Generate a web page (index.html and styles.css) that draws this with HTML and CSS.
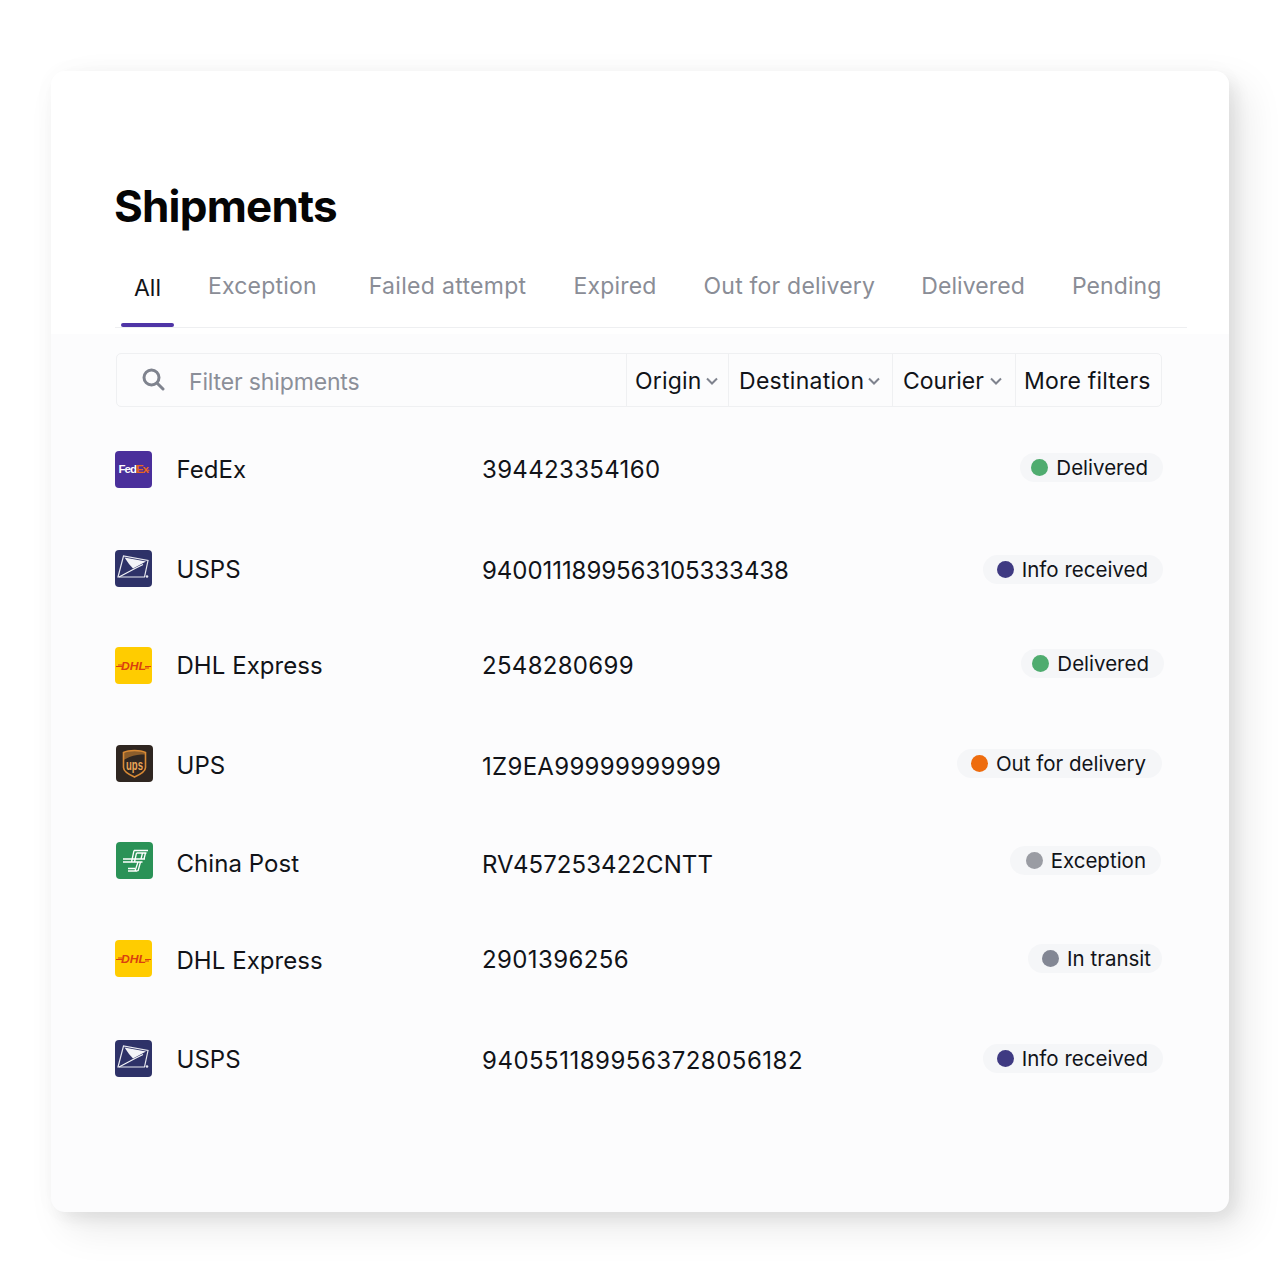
FILE: index.html
```html
<!DOCTYPE html>
<html lang="en">
<head>
    <meta charset="UTF-8">
    <title>Shipments</title>
    <link rel="stylesheet" href="styles.css">
</head>
<body>
    <div class="card">
        <header class="card-head">
            <h1>Shipments</h1>
            <nav class="tabs">
                <a class="tab tab-active">All</a>
                <a class="tab tab-wide">Exception</a>
                <a class="tab tab-failed">Failed attempt</a>
                <a class="tab">Expired</a>
                <a class="tab tab-out">Out for delivery</a>
                <a class="tab tab-tight">Delivered</a>
                <a class="tab tab-tight">Pending</a>
            </nav>
        </header>
        <main class="card-body">
            <div class="filters">
                <div class="search">
                    <svg class="search-icon" viewBox="0 0 24 24" width="24" height="24"><circle cx="10.5" cy="10.5" r="7.5" fill="none" stroke="#7f838e" stroke-width="3"/><path d="M16 16l6 6" stroke="#7f838e" stroke-width="3" stroke-linecap="round"/></svg>
                    <span>Filter shipments</span>
                </div>
                <div class="filter filter-origin">Origin<svg class="chev" viewBox="0 0 12 8" width="12" height="8"><path d="M1 1.500l5 5 5-5" fill="none" stroke="#7f838e" stroke-width="2"/></svg></div>
                <div class="filter filter-dest">Destination<svg class="chev" viewBox="0 0 12 8" width="12" height="8"><path d="M1 1.500l5 5 5-5" fill="none" stroke="#7f838e" stroke-width="2"/></svg></div>
                <div class="filter filter-courier">Courier<svg class="chev" viewBox="0 0 12 8" width="12" height="8"><path d="M1 1.500l5 5 5-5" fill="none" stroke="#7f838e" stroke-width="2"/></svg></div>
                <div class="filter filter-more">More filters</div>
            </div>

            <div class="rows">
                <div class="row">
                    <svg class="logo" viewBox="0 0 37 37"><rect width="37" height="37" rx="4" fill="#4a2f9b"/><text x="3.500" y="22" class="fedex"><tspan fill="#fff">Fed</tspan><tspan fill="#e8661a">Ex</tspan></text><path d="M32 19.500h2.500M33.250 18.250v2.500" stroke="#e8661a" stroke-width=".7"/></svg>
                    <span class="name">FedEx</span>
                    <span class="num">394423354160</span>
                    <span class="pill pill-delivered"><i class="dot dot-green"></i>Delivered</span>
                </div>
                <div class="row">
                    <svg class="logo" viewBox="0 0 37 37"><rect width="37" height="37" rx="4" fill="#2e3268"/><path d="M3 27L8.500 6 33 10.500 29.500 27z" fill="none" stroke="#e8e9f0" stroke-width="1.200"/><path d="M9.500 7.500L31 11.500 18 18.500 14 14z" fill="#f3f4f8"/><path d="M4 27L20 18.500 28 14.500" fill="none" stroke="#f3f4f8" stroke-width="1.200"/><circle cx="32" cy="26.500" r="1.300" fill="#e8e9f0"/></svg>
                    <span class="name">USPS</span>
                    <span class="num">9400111899563105333438</span>
                    <span class="pill pill-info"><i class="dot dot-navy"></i>Info received</span>
                </div>
                <div class="row">
                    <svg class="logo" viewBox="0 0 37 37"><rect width="37" height="37" rx="4" fill="#ffcc00"/><path d="M1 19.500h6M30 19.500h6M3 18h4M30 21h4" stroke="#d9400f" stroke-width="1"/><text x="6" y="22.500" class="dhl" textLength="25" lengthAdjust="spacingAndGlyphs">DHL</text></svg>
                    <span class="name">DHL Express</span>
                    <span class="num">2548280699</span>
                    <span class="pill pill-delivered pill-shift"><i class="dot dot-green"></i>Delivered</span>
                </div>
                <div class="row">
                    <svg class="logo logo-ups" viewBox="0 0 37 37"><rect width="37" height="37" rx="4" fill="#2f2621"/><path d="M18.500 5.500c4 0 8 .5 11 2v15c0 4.500-6.500 7.500-11 9.500-4.500-2-11-5-11-9.500v-15c3-1.500 7-2 11-2z" fill="none" stroke="#d98a35" stroke-width="1.600"/><path d="M18.500 5.500c4 0 8 .5 11 2v2c-6 0-11 .5-16 2.500l-6 3V7.500c3-1.500 7-2 11-2z" fill="#d98a35" opacity=".55"/><text x="10" y="24.500" class="ups" textLength="17" lengthAdjust="spacingAndGlyphs">ups</text></svg>
                    <span class="name">UPS</span>
                    <span class="num">1Z9EA99999999999</span>
                    <span class="pill pill-out"><i class="dot dot-orange"></i>Out for delivery</span>
                </div>
                <div class="row">
                    <svg class="logo logo-china" viewBox="0 0 37 37"><rect width="37" height="37" rx="4" fill="#2a9257"/><path d="M18 8.500h14M20.500 11h10M7 17h22M7 20h19.500M12 26.500h7M12 29h9.500M18 8.500l-2.500 11.500M20.500 11l-2 9M22 20l-3 9M26.500 11l-1.500 6M29.500 11l-1.500 6M24.500 20l-2.500 9" fill="none" stroke="#fff" stroke-width="1.300"/></svg>
                    <span class="name">China Post</span>
                    <span class="num">RV457253422CNTT</span>
                    <span class="pill pill-exception"><i class="dot dot-gray"></i>Exception</span>
                </div>
                <div class="row">
                    <svg class="logo" viewBox="0 0 37 37"><rect width="37" height="37" rx="4" fill="#ffcc00"/><path d="M1 19.500h6M30 19.500h6M3 18h4M30 21h4" stroke="#d9400f" stroke-width="1"/><text x="6" y="22.500" class="dhl" textLength="25" lengthAdjust="spacingAndGlyphs">DHL</text></svg>
                    <span class="name">DHL Express</span>
                    <span class="num">2901396256</span>
                    <span class="pill pill-transit"><i class="dot dot-slate"></i>In transit</span>
                </div>
                <div class="row">
                    <svg class="logo" viewBox="0 0 37 37"><rect width="37" height="37" rx="4" fill="#2e3268"/><path d="M3 27L8.500 6 33 10.500 29.500 27z" fill="none" stroke="#e8e9f0" stroke-width="1.200"/><path d="M9.500 7.500L31 11.500 18 18.500 14 14z" fill="#f3f4f8"/><path d="M4 27L20 18.500 28 14.500" fill="none" stroke="#f3f4f8" stroke-width="1.200"/><circle cx="32" cy="26.500" r="1.300" fill="#e8e9f0"/></svg>
                    <span class="name">USPS</span>
                    <span class="num">9405511899563728056182</span>
                    <span class="pill pill-info"><i class="dot dot-navy"></i>Info received</span>
                </div>
            </div>
        </main>
    </div>
</body>
</html>
```

FILE: styles.css
```css
* {
    box-sizing: border-box;
}
html, body {
    margin: 0;
    background: #fff;
}
body {
    width: 1280px;
    height: 1280px;
    padding: 71px 51px 0;
    font-family: Inter, "Liberation Sans", sans-serif;
    color: #111318;
    overflow: hidden;
}
.card {
    width: 1178px;
    height: 1141px;
    border-radius: 14px;
    overflow: hidden;
    background: #fcfcfd;
    box-shadow: 8px 8px 16px rgba(0,0,0,0.06), 16px 16px 40px rgba(0,0,0,0.09), 0 0 26px rgba(0,0,0,0.025);
    display: flex;
    flex-direction: column;
}
.card-head {
    background: #fff;
    height: 263px;
    padding: 107px 42px 0 64px;
}
h1 {
    margin: 0 0 0 -1px;
    font-size: 44px;
    line-height: 56px;
    font-weight: 700;
    letter-spacing: -0.8px;
    color: #050505;
}
.tabs {
    display: flex;
    margin-top: 28px;
    height: 66px;
    border-bottom: 1px solid #eeeff1;
    padding-left: 6px;
    font-size: 23px;
    letter-spacing: 0.2px;
    color: #8a8d96;
}
.tab {
    padding: 8px 0 0;
    margin-right: 47px;
    line-height: 32px;
    white-space: nowrap;
}
.tab-wide {
    margin-right: 52px;
}
.tab-failed {
    letter-spacing: 0.3px;
}
.tab-out {
    margin-right: 46px;
}
.tab-tight {
    letter-spacing: 0.1px;
}
.tab-active {
    color: #111318;
    margin-left: 13px;
    padding-top: 10px;
    letter-spacing: 0;
    position: relative;
}
.tab-active::after {
    content: "";
    position: absolute;
    left: -13px;
    right: -13px;
    bottom: 0;
    height: 4px;
    border-radius: 2px;
    background: #4f35a6;
}
.card-body {
    flex: 1;
    padding: 19px 0 0 64px;
}
.filters {
    display: flex;
    width: 1046px;
    height: 54px;
    margin-left: 1px;
    border: 1px solid #eff0f2;
    border-radius: 5px;
    font-size: 23px;
    letter-spacing: 0.28px;
    align-items: stretch;
}
.search {
    width: 509px;
    display: flex;
    align-items: center;
    gap: 24px;
    padding: 4px 0 0 24px;
    letter-spacing: -0.15px;
    color: #8b8f99;
}
.search-icon {
    margin-top: -6px;
}
.filter {
    display: flex;
    align-items: center;
    padding-top: 2px;
    border-left: 1px solid #eff0f2;
    white-space: nowrap;
}
.filter-origin { width: 102px; padding-left: 8px; gap: 4px; letter-spacing: 0.2px; }
.filter-dest { width: 164px; padding-left: 10px; gap: 4px; }
.filter-courier { width: 123px; padding-left: 10px; gap: 6px; letter-spacing: 0; }
.filter-more { flex: 1; padding-left: 8px; letter-spacing: 0.2px; }
.rows {
    display: grid;
    grid-template-rows: 99px 99px 95px 101px 93px 103px 97px;
    width: 1048px;
    margin-top: 13px;
}
.row {
    display: grid;
    grid-template-columns: 61.5px 305.5px 1fr auto;
    align-items: center;
    font-size: 24px;
}
.name {
    letter-spacing: 0.05px;
}
.logo {
    width: 37px;
    height: 37px;
    display: block;
}
.logo-ups, .logo-china {
    margin-left: 1px;
}
.fedex {
    font-family: "Liberation Sans", sans-serif;
    font-weight: 700;
    font-size: 11.5px;
    letter-spacing: -1px;
}
.dhl {
    font-family: "Liberation Sans", sans-serif;
    font-weight: 700;
    font-style: italic;
    font-size: 10px;
    fill: #d9400f;
}
.ups {
    font-family: "Liberation Sans", sans-serif;
    font-weight: 700;
    font-size: 15px;
    fill: #eaa558;
}
.pill {
    display: flex;
    align-items: center;
    height: 29px;
    border-radius: 15px;
    background: #f5f6f8;
    padding: 0 15px 0 11px;
    font-size: 20.5px;
    white-space: nowrap;
}
.dot {
    width: 17px;
    height: 17px;
    border-radius: 50%;
    margin-right: 8px;
}
.dot-green { background: #4fac6f; }
.dot-navy { background: #3f3a82; }
.dot-orange { background: #ee6c0e; }
.dot-gray { background: #9a9ca3; }
.dot-slate { background: #838794; }
.pill-info { padding-left: 14px; }
.pill-out { padding: 0 16px 0 14px; margin-right: 1px; }
.pill-exception { padding-left: 16px; margin-right: 2px; }
.pill-transit { padding: 0 11px 0 14px; margin-right: 1px; }
.pill-shift { margin-right: -1px; }

/* the rows are not quite even in the original, so nudge each one */
.row:nth-child(1) .num { letter-spacing: 0.33px; }
.row:nth-child(1) .pill { margin-bottom: 4px; }
.row:nth-child(2) .num { letter-spacing: -0.05px; margin-top: 4px; }
.row:nth-child(2) .name { margin-top: 1px; }
.row:nth-child(2) .pill { margin-top: 2px; }
.row:nth-child(3) .num { letter-spacing: 0.3px; }
.row:nth-child(3) .pill { margin-bottom: 4px; }
.row:nth-child(4) .num { letter-spacing: 0.3px; margin-top: 5px; }
.row:nth-child(4) .name { margin-top: 3px; }
.row:nth-child(5) .num { letter-spacing: 0.07px; margin-top: 7px; }
.row:nth-child(5) .name { margin-top: 5px; }
.row:nth-child(6) .num { letter-spacing: 0.4px; margin-top: 1px; }
.row:nth-child(6) .name { margin-top: 3px; }
.row:nth-child(7) .num { letter-spacing: 0.5px; margin-top: 3px; }
.row:nth-child(7) .name { margin-top: 1px; }
.row:nth-child(7) .pill { margin-bottom: 1px; }
```
